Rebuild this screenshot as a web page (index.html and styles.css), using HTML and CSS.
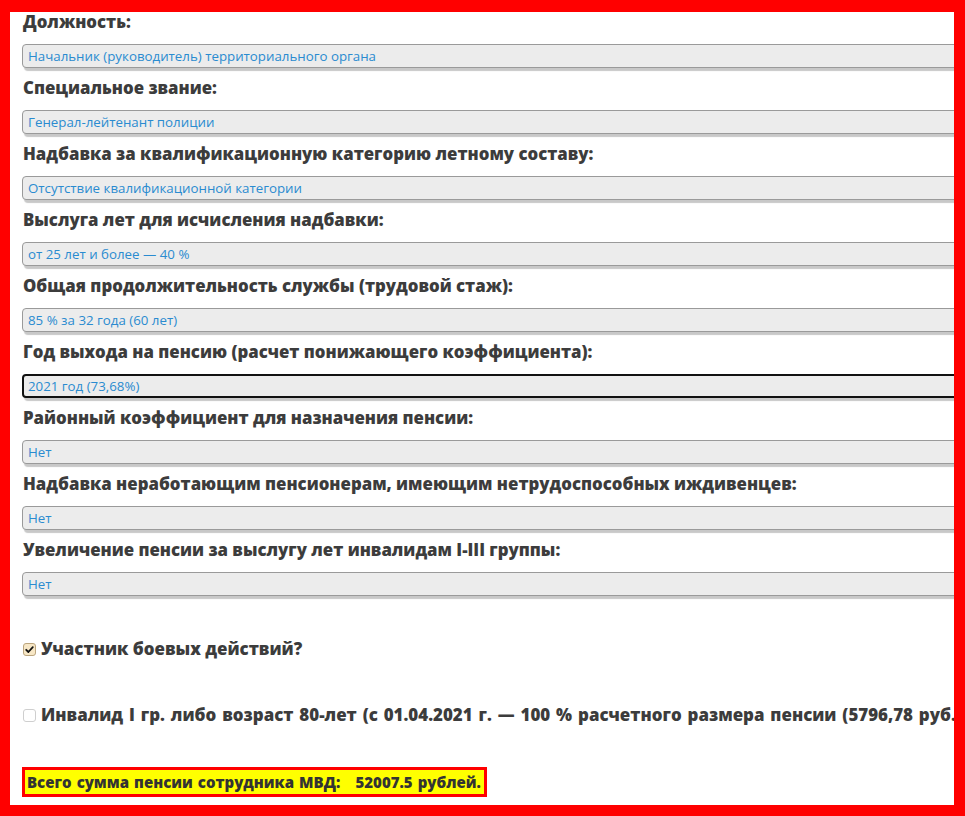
FILE: index.html
```html
<!DOCTYPE html>
<html lang="ru">
<head>
<meta charset="utf-8">
<title>Калькулятор пенсии МВД</title>
<link rel="stylesheet" href="styles.css">
</head>
<body>
<div class="frame">
  <div class="field">
    <div class="label">Должность:</div>
    <div class="select">Начальник (руководитель) территориального органа</div>
  </div>
  <div class="field">
    <div class="label">Специальное звание:</div>
    <div class="select">Генерал-лейтенант полиции</div>
  </div>
  <div class="field">
    <div class="label">Надбавка за квалификационную категорию летному составу:</div>
    <div class="select">Отсутствие квалификационной категории</div>
  </div>
  <div class="field">
    <div class="label">Выслуга лет для исчисления надбавки:</div>
    <div class="select">от 25 лет и более — 40 %</div>
  </div>
  <div class="field">
    <div class="label">Общая продолжительность службы (трудовой стаж):</div>
    <div class="select">85 % за 32 года (60 лет)</div>
  </div>
  <div class="field">
    <div class="label">Год выхода на пенсию (расчет понижающего коэффициента):</div>
    <div class="select focused">2021 год (73,68%)</div>
  </div>
  <div class="field">
    <div class="label">Районный коэффициент для назначения пенсии:</div>
    <div class="select">Нет</div>
  </div>
  <div class="field">
    <div class="label">Надбавка неработающим пенсионерам, имеющим нетрудоспособных иждивенцев:</div>
    <div class="select">Нет</div>
  </div>
  <div class="field">
    <div class="label">Увеличение пенсии за выслугу лет инвалидам I-III группы:</div>
    <div class="select">Нет</div>
  </div>

  <div class="check-row first">
    <span class="box checked"><svg viewBox="0 0 13 13" width="13" height="13"><path d="M3.2 6.8 L5.4 9 L9.8 4.2" fill="none" stroke="#111" stroke-width="1.8" stroke-linecap="round" stroke-linejoin="round"/></svg></span>
    <span class="check-text">Участник боевых действий?</span>
  </div>
  <div class="check-row">
    <span class="box"></span>
    <span class="check-text wide">Инвалид I гр. либо возраст 80-лет (с 01.04.2021 г. — 100 % расчетного размера пенсии (5796,78 руб.)</span>
  </div>

  <div class="total">Всего сумма пенсии сотрудника МВД:&nbsp;&nbsp; 52007.5 рублей.</div>
</div>
</body>
</html>
```
FILE: styles.css
```css
html, body {
  margin: 0;
  padding: 0;
  background: #fff;
}
.frame {
  width: 965px;
  height: 816px;
  box-sizing: border-box;
  border-style: solid;
  border-color: #ff0000;
  border-width: 12px 11px 11px 10px;
  overflow: hidden;
  padding-left: 12px;
  font-family: "Open Sans", "Noto Sans", sans-serif;
  color: #3c3c3c;
}
.field {
  margin-bottom: 10px;
}
.label {
  font-size: 16.8px;
  font-weight: 800;
  line-height: 20px;
  height: 20px;
  margin-bottom: 12px;
  padding-left: 1px;
  white-space: nowrap;
}
.select {
  width: 1000px;
  height: 24px;
  box-sizing: border-box;
  background: #ececec;
  border: 1px solid #9a9a9a;
  border-radius: 4px;
  box-shadow: 2px 3px 1px #c8c8c8;
  color: #2a8bd0;
  font-size: 13.3px;
  line-height: 22px;
  padding-left: 5px;
  white-space: nowrap;
}
.select.focused {
  border: 2px solid #111;
  line-height: 20px;
  padding-left: 4px;
}
.check-row {
  display: flex;
  align-items: center;
  gap: 5px;
  height: 24px;
  margin-top: 42px;
  padding-left: 1px;
  white-space: nowrap;
}
.check-row.first {
  margin-top: 41px;
}
.box {
  flex: none;
  width: 13px;
  height: 13px;
  box-sizing: border-box;
  border: 1px solid #cfcfcf;
  border-radius: 3px;
  background: #fff;
  display: flex;
  margin-top: 1px;
}
.box.checked {
  background: #f7e7c6;
  border-color: #bba57e;
}
.box svg {
  display: block;
  margin: -1px;
}
.check-text {
  font-size: 16.9px;
  font-weight: 800;
  line-height: 24px;
}
.check-text.wide {
  word-spacing: 1.5px;
}
.total {
  display: inline-block;
  margin-top: 40px;
  height: 30px;
  box-sizing: border-box;
  border: 3px solid #ff0000;
  background: #ffff00;
  color: #333;
  font-size: 15px;
  font-weight: 800;
  line-height: 24px;
  padding: 0 3px 0 2px;
  word-spacing: 1.2px;
  white-space: nowrap;
}
```
